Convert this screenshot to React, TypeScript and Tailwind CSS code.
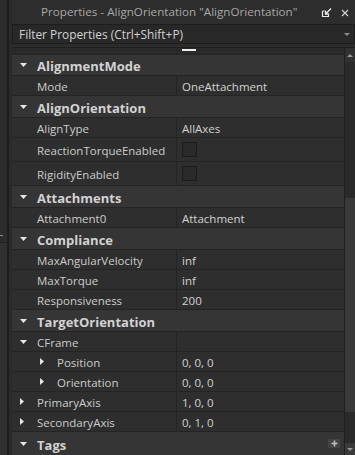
import React from 'react';

type Row =
  | { kind: 'cat'; label: string; h?: string }
  | {
      kind: 'prop';
      label: string;
      value?: string;
      check?: boolean;
      indent?: number;
      arrow?: 'down' | 'right';
    };

const rows: Row[] = [
  { kind: 'cat', label: 'AlignmentMode', h: 'h-[21px]' },
  { kind: 'prop', label: 'Mode', value: 'OneAttachment' },
  { kind: 'cat', label: 'AlignOrientation' },
  { kind: 'prop', label: 'AlignType', value: 'AllAxes' },
  { kind: 'prop', label: 'ReactionTorqueEnabled', check: true },
  { kind: 'prop', label: 'RigidityEnabled', check: true },
  { kind: 'cat', label: 'Attachments' },
  { kind: 'prop', label: 'Attachment0', value: 'Attachment' },
  { kind: 'cat', label: 'Compliance' },
  { kind: 'prop', label: 'MaxAngularVelocity', value: 'inf' },
  { kind: 'prop', label: 'MaxTorque', value: 'inf' },
  { kind: 'prop', label: 'Responsiveness', value: '200' },
  { kind: 'cat', label: 'TargetOrientation' },
  { kind: 'prop', label: 'CFrame', arrow: 'down' },
  { kind: 'prop', label: 'Position', value: '0, 0, 0', indent: 1, arrow: 'right' },
  { kind: 'prop', label: 'Orientation', value: '0, 0, 0', indent: 1, arrow: 'right' },
  { kind: 'prop', label: 'PrimaryAxis', value: '1, 0, 0', arrow: 'right' },
  { kind: 'prop', label: 'SecondaryAxis', value: '0, 1, 0', arrow: 'right' },
];

const Down = () => (
  <svg width="7" height="4" viewBox="0 0 7 4" className="shrink-0">
    <path d="M0 0 H7 L3.5 4 Z" fill="#e6e6e6" />
  </svg>
);

const Right = () => (
  <svg width="4" height="7" viewBox="0 0 4 7" className="shrink-0">
    <path d="M0 0 V7 L4 3.5 Z" fill="#e6e6e6" />
  </svg>
);

const CatRow = ({ label, h }: { label: string; h?: string }) => (
  <div className={`${h ?? 'h-[22px]'} shrink-0 flex items-center bg-[#353535] border-b border-[#242424]`}>
    <div className="w-[25px] pl-[8px] flex items-center">
      <Down />
    </div>
    <span className="pt-[2px] font-bold text-[13px] text-[#d2d2d2]">{label}</span>
  </div>
);

const PropRow = ({ row }: { row: Extract<Row, { kind: 'prop' }> }) => (
  <div className={`${row.check ? 'h-[24px]' : 'h-[20px]'} shrink-0 flex bg-[#2e2e2e] border-b border-[#242424]`}>
    <div className="w-[165px] shrink-0 flex items-center border-r border-[#242424]">
      <div className={`${row.indent ? 'w-[45px] pl-[28px]' : 'w-[25px] pl-[8px]'} flex items-center`}>
        {row.arrow === 'down' && <Down />}
        {row.arrow === 'right' && <Right />}
      </div>
      <span className="pt-[2px] text-[#cccccc] whitespace-nowrap">{row.label}</span>
    </div>
    <div className="flex-1 flex items-center pl-[5px] text-[#d2d2d2]">
      {row.check ? (
        <div className="w-[15px] h-[15px] bg-[#2a2a2a] border border-[#1b1b1b]" />
      ) : (
        <span className="pt-[2px]">{row.value}</span>
      )}
    </div>
  </div>
);

export default function App() {
  return (
    <div className="w-[355px] h-[455px] flex bg-[#2b2b2b] overflow-hidden font-['Open_Sans',sans-serif] text-[11.5px] leading-[16px]">
      {/* neighbouring dock area */}
      <div className="w-[12px] shrink-0 flex">
        <div className="w-[7px] flex flex-col">
          <div className="h-[243px] bg-[#2c2c2c] border-b border-[#1f1f1f] relative">
            <div className="absolute left-0 top-[235px] w-[3px] h-px bg-[#8a8a8a]" />
          </div>
          <div className="flex-1 bg-[#303030]" />
        </div>
        <div className="w-[2px] bg-[#1e1e1e]" />
        <div className="w-[3px] bg-[#2a2a2a]" />
      </div>

      <div className="flex-1 flex flex-col bg-[#2d2d2d] min-w-0">
        {/* title bar */}
        <div className="h-[24px] shrink-0 flex items-center relative">
          <span className="pl-[29px] text-[11.65px] text-[#a8a8a8] whitespace-nowrap">
            Properties - AlignOrientation "AlignOrientation"
          </span>
          <div className="absolute right-[6px] top-[8px] flex items-center gap-[9px]">
            <svg width="11" height="10" viewBox="0 0 11 10">
              <path d="M1.5 3 V8.5 H7.5 V6.5 M1.5 3 H3.5" stroke="#ececec" strokeWidth="1.2" fill="none" />
              <path d="M10 0.5 L5 5.5 M4.5 2.5 V6 H8" stroke="#ececec" strokeWidth="1.3" fill="none" />
            </svg>
            <svg width="8" height="8" viewBox="0 0 8 8">
              <path d="M1 1 L7 7 M7 1 L1 7" stroke="#cfcfcf" strokeWidth="1.2" />
            </svg>
          </div>
        </div>

        {/* filter box */}
        <div className="h-[20px] shrink-0 flex items-center bg-[#282828] border border-[#1d1d1d] pl-[6px] pr-[4px]">
          <span className="flex-1 text-[11.9px] text-[#d2d2d2] whitespace-nowrap">Filter Properties (Ctrl+Shift+P)</span>
          <svg width="6" height="3" viewBox="0 0 6 3">
            <path d="M0 0 H6 L3 3 Z" fill="#8a8a8a" />
          </svg>
        </div>

        <div className="h-[3px] shrink-0" />

        {/* property grid */}
        <div className="flex-1 flex border-t border-[#1f1f1f] min-h-0">
          <div className="flex-1 flex flex-col min-w-0">
            <div className="h-[7px] shrink-0 flex bg-[#2a2a2a] border-b border-[#242424]">
              <div className="w-[165px] border-r border-[#222222]" />
              <div className="pl-[5px] pt-[1px]">
                <div className="w-[14px] h-[2px] bg-[#f0f0f0]" />
              </div>
            </div>
            {rows.map((r, i) =>
              r.kind === 'cat' ? <CatRow key={i} label={r.label} h={r.h} /> : <PropRow key={i} row={r} />
            )}
            <div className="h-[23px] shrink-0 flex items-center bg-[#353535] pr-[4px]">
              <div className="w-[25px] pl-[8px] flex items-center">
                <Down />
              </div>
              <span className="flex-1 pt-[2px] font-bold text-[13px] text-[#d2d2d2]">Tags</span>
              <div className="w-[12px] h-[9px] bg-[#444444] flex items-center justify-center">
                <svg width="7" height="7" viewBox="0 0 7 7">
                  <path d="M3.5 0.5 V6.5 M0.5 3.5 H6.5" stroke="#c0c0c0" strokeWidth="1.5" />
                </svg>
              </div>
            </div>
          </div>

          {/* scrollbar */}
          <div className="w-[11px] shrink-0 flex flex-col bg-[#2a2a2a] border-l border-[#1f1f1f]">
            <div className="h-[14px] flex items-center justify-center bg-[#313131]">
              <svg width="6" height="3" viewBox="0 0 6 3">
                <path d="M0 3 H6 L3 0 Z" fill="#9a9a9a" />
              </svg>
            </div>
            <div className="h-[136px]" />
            <div className="h-[214px] bg-[#393939]" />
            <div className="flex-1" />
            <div className="h-[12px] flex items-center justify-center bg-[#3a3a3a]">
              <svg width="6" height="3" viewBox="0 0 6 3">
                <path d="M0 0 H6 L3 3 Z" fill="#9a9a9a" />
              </svg>
            </div>
          </div>
        </div>
      </div>
    </div>
  );
}
